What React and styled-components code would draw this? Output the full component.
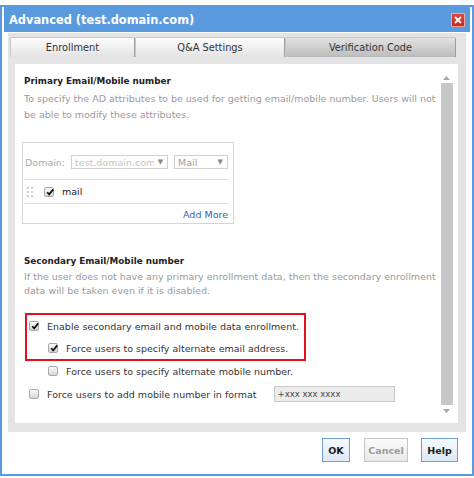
import React from 'react';
import styled, { createGlobalStyle } from 'styled-components';

const GlobalStyle = createGlobalStyle`
    html, body {
        margin: 0;
        padding: 0;
        background: #fff;
    }
    body {
        font-family: 'DejaVu Sans', Verdana, sans-serif;
    }
`;

const Page = styled.div`
    padding-top: 5px;
    width: 474px;
`;

const Window = styled.div`
    box-sizing: border-box;
    width: 474px;
    height: 471px;
    border: 2px solid #5a9be0;
    padding: 0 2px 2px;
    display: flex;
    flex-direction: column;
    background: #fff;
`;

const TitleBar = styled.div`
    height: 25px;
    flex-shrink: 0;
    background: #5a9ade;
    display: flex;
    align-items: center;
    justify-content: space-between;
    padding: 0 5px;
`;

const Title = styled.span`
    font-size: 11.4px;
    font-weight: 700;
    color: #fff;
`;

const CloseButton = styled.span`
    box-sizing: border-box;
    width: 14px;
    height: 14px;
    border: 1px solid #f0a49c;
    background: linear-gradient(#e4473a, #c62a1f);
    display: flex;
    align-items: center;
    justify-content: center;
`;

const Panel = styled.div`
    box-sizing: border-box;
    height: 399px;
    margin: 1px 4px 0;
    padding: 4px 0 9px;
    background: #e4e4e4;
    display: flex;
    flex-direction: column;
`;

const TabRow = styled.div`
    display: flex;
    height: 20px;
    margin: 0 10px 0 2px;
`;

const Tab = styled.div`
    box-sizing: border-box;
    width: ${p => p.$w}px;
    border: 1px solid #c9c9c9;
    border-right-color: #9d9d9d;
    border-bottom: none;
    border-radius: 2px 2px 0 0;
    background: ${p => (p.$active
        ? 'linear-gradient(#e2e2e2, #bcbcbc)'
        : 'linear-gradient(#fdfdfd, #e3e3e3)')};
    display: flex;
    align-items: center;
    justify-content: center;
    font-size: 9.8px;
    color: #333;
`;

const Content = styled.div`
    flex: 1;
    margin: 7px 8px 0 7px;
    background: #fff;
    display: flex;
`;

const Main = styled.div`
    flex: 1;
    padding: 10px 0 0 9px;
`;

const Heading = styled.div`
    font-size: 8.8px;
    line-height: 15px;
    font-weight: 700;
    color: #222;
    margin-top: ${p => p.$top || 0}px;
`;

const Description = styled.div`
    font-size: 9.5px;
    line-height: ${p => p.$lh}px;
    color: #9a9a9a;
    margin-top: ${p => p.$top}px;
    white-space: nowrap;
`;

const AttrBox = styled.div`
    box-sizing: border-box;
    width: 212px;
    height: 82px;
    margin: 20px 0 0 -2px;
    border: 1px solid #d6d6d6;
    display: flex;
    flex-direction: column;
`;

const SelectRow = styled.div`
    display: flex;
    align-items: center;
    margin: 0 5px 0 2px;
    padding: 12px 0 10px;
    border-bottom: 1px solid #dcdcdc;
    font-size: 9.5px;
    color: #ababab;
`;

const FakeSelect = styled.span`
    box-sizing: border-box;
    width: ${p => p.$w}px;
    height: 14px;
    margin-left: ${p => p.$ml}px;
    border: 1px solid #d0d0d0;
    display: flex;
    align-items: center;
    padding: 0 4px 0 3px;
    color: ${p => p.$color};
    white-space: nowrap;
`;

const SelectText = styled.span`
    overflow: hidden;
    flex: 1;
    min-width: 0;
`;

const Arrow = styled.span`
    font-size: 7px;
    color: #8a8a8a;
    margin-left: 4px;
`;

const MailRow = styled.div`
    display: flex;
    align-items: center;
    height: 23px;
    margin: 0 5px 0 2px;
    padding-left: 2px;
    border-bottom: 1px solid #dcdcdc;
    font-size: 9.5px;
    color: #222;
`;

const DragDots = styled.span`
    display: grid;
    grid-template-columns: 2px 2px;
    gap: 2px;
    margin-right: 11px;
    & > i {
        width: 2px;
        height: 2px;
        background: #d4d4d4;
    }
`;

const AddRow = styled.div`
    flex: 1;
    display: flex;
    align-items: center;
    justify-content: flex-end;
    padding: 1px 5px 0 0;
`;

const AddLink = styled.a`
    font-size: 9.5px;
    color: #2f5fb5;
    text-decoration: none;
`;

const RedBox = styled.div`
    width: 281px;
    box-sizing: border-box;
    margin: 15px 0 0 1px;
    border: 2px solid #e2111b;
`;

const OptionRow = styled.div`
    display: flex;
    align-items: center;
    height: ${p => p.$h}px;
    padding-left: ${p => p.$indent}px;
    font-size: 9.5px;
    color: #333;
    white-space: nowrap;
`;

const Box = styled.span`
    box-sizing: border-box;
    width: 10px;
    height: 10px;
    flex-shrink: 0;
    border: 1px solid #a9a9a9;
    border-radius: 2px;
    background: linear-gradient(#fafafa, #d6d6d6);
    margin-right: ${p => p.$mr || 8}px;
    position: relative;
    & > svg {
        position: absolute;
        left: 0;
        top: -1px;
    }
`;

const FormatInput = styled.span`
    box-sizing: border-box;
    width: 121px;
    height: 16px;
    margin-left: 17px;
    border: 1px solid #c9c9c9;
    background: #ececec;
    display: flex;
    align-items: center;
    padding-left: 3px;
    font-size: 8.5px;
    color: #444;
`;

const ScrollBar = styled.div`
    width: 13px;
    margin-right: 5px;
    padding-top: 8px;
    display: flex;
    flex-direction: column;
    align-items: center;
`;

const ScrollArrow = styled.div`
    height: ${p => p.$h}px;
    width: 13px;
    display: flex;
    align-items: center;
    justify-content: center;
`;

const Thumb = styled.div`
    width: 12px;
    height: 322px;
    background: #c6c6c6;
`;

const Footer = styled.div`
    flex: 1;
    display: flex;
    justify-content: flex-end;
    align-items: flex-start;
    padding: 6px 12px 0 0;
`;

const Button = styled.button`
    box-sizing: border-box;
    width: ${p => p.$w}px;
    height: 24px;
    margin-left: ${p => p.$ml}px;
    padding: 0;
    border: 1px solid ${p => (p.$disabled ? '#c4c4c4' : '#6c9fd6')};
    background: ${p => (p.$disabled
        ? 'linear-gradient(#fbfbfb, #e9e9e9)'
        : 'linear-gradient(#f7fafd, #dce8f5)')};
    font-family: 'DejaVu Sans', Verdana, sans-serif;
    font-size: 9.5px;
    font-weight: 700;
    color: ${p => (p.$disabled ? '#9a9a9a' : '#1c1c1c')};
`;

const Check = ({ checked, mr }) => (
    <Box $mr={mr}>
        {checked && (
            <svg width="10" height="10" viewBox="0 0 10 10">
                <path d="M2.2 5.2 L4.2 7.4 L8.2 2.4" fill="none" stroke="#111" strokeWidth="1.7" />
            </svg>
        )}
    </Box>
);

const App = () => (
    <Page>
        <GlobalStyle />
        <Window>
            <TitleBar>
                <Title>Advanced (test.domain.com)</Title>
                <CloseButton>
                    <svg width="8" height="8" viewBox="0 0 8 8">
                        <path d="M1 1 L7 7 M7 1 L1 7" stroke="#fff" strokeWidth="1.8" />
                    </svg>
                </CloseButton>
            </TitleBar>
            <Panel>
                <TabRow>
                    <Tab $w={125}>Enrollment</Tab>
                    <Tab $w={150}>Q&amp;A Settings</Tab>
                    <Tab $w={171} $active>Verification Code</Tab>
                </TabRow>
                <Content>
                    <Main>
                        <Heading>Primary Email/Mobile number</Heading>
                        <Description $lh={15.5} $top={2}>
                            To specify the AD attributes to be used for getting email/mobile number. Users will not
                            <br />
                            be able to modify these attributes.
                        </Description>
                        <AttrBox>
                            <SelectRow>
                                Domain:
                                <FakeSelect $w={97} $ml={6} $color="#c4c4c4">
                                    <SelectText>test.domain.com</SelectText>
                                    <Arrow>▼</Arrow>
                                </FakeSelect>
                                <FakeSelect $w={55} $ml={6} $color="#a0a0a0">
                                    <SelectText>Mail</SelectText>
                                    <Arrow>▼</Arrow>
                                </FakeSelect>
                            </SelectRow>
                            <MailRow>
                                <DragDots>
                                    <i /><i /><i /><i /><i /><i />
                                </DragDots>
                                <Check checked />
                                mail
                            </MailRow>
                            <AddRow>
                                <AddLink href="#">Add More</AddLink>
                            </AddRow>
                        </AttrBox>
                        <Heading $top={30}>Secondary Email/Mobile number</Heading>
                        <Description $lh={14} $top={1}>
                            If the user does not have any primary enrollment data, then the secondary enrollment
                            <br />
                            data will be taken even if it is disabled.
                        </Description>
                        <RedBox>
                            <OptionRow $h={22} $indent={2}>
                                <Check checked />
                                Enable secondary email and mobile data enrollment.
                            </OptionRow>
                            <OptionRow $h={22} $indent={21}>
                                <Check checked />
                                Force users to specify alternate email address.
                            </OptionRow>
                        </RedBox>
                        <OptionRow $h={20} $indent={24}>
                            <Check />
                            Force users to specify alternate mobile number.
                        </OptionRow>
                        <OptionRow $h={26} $indent={5}>
                            <Check />
                            Force users to add mobile number in format
                            <FormatInput>+xxx xxx xxxx</FormatInput>
                        </OptionRow>
                    </Main>
                    <ScrollBar>
                        <ScrollArrow $h={11}>
                            <svg width="7" height="4" viewBox="0 0 7 4">
                                <path d="M0 4 L3.5 0 L7 4 Z" fill="#a8a8a8" />
                            </svg>
                        </ScrollArrow>
                        <Thumb />
                        <ScrollArrow $h={12}>
                            <svg width="7" height="4" viewBox="0 0 7 4">
                                <path d="M0 0 L3.5 4 L7 0 Z" fill="#a8a8a8" />
                            </svg>
                        </ScrollArrow>
                    </ScrollBar>
                </Content>
            </Panel>
            <Footer>
                <Button $w={28} $ml={0}>OK</Button>
                <Button $w={44} $ml={14} $disabled>Cancel</Button>
                <Button $w={37} $ml={13}>Help</Button>
            </Footer>
        </Window>
    </Page>
);

export default App;
